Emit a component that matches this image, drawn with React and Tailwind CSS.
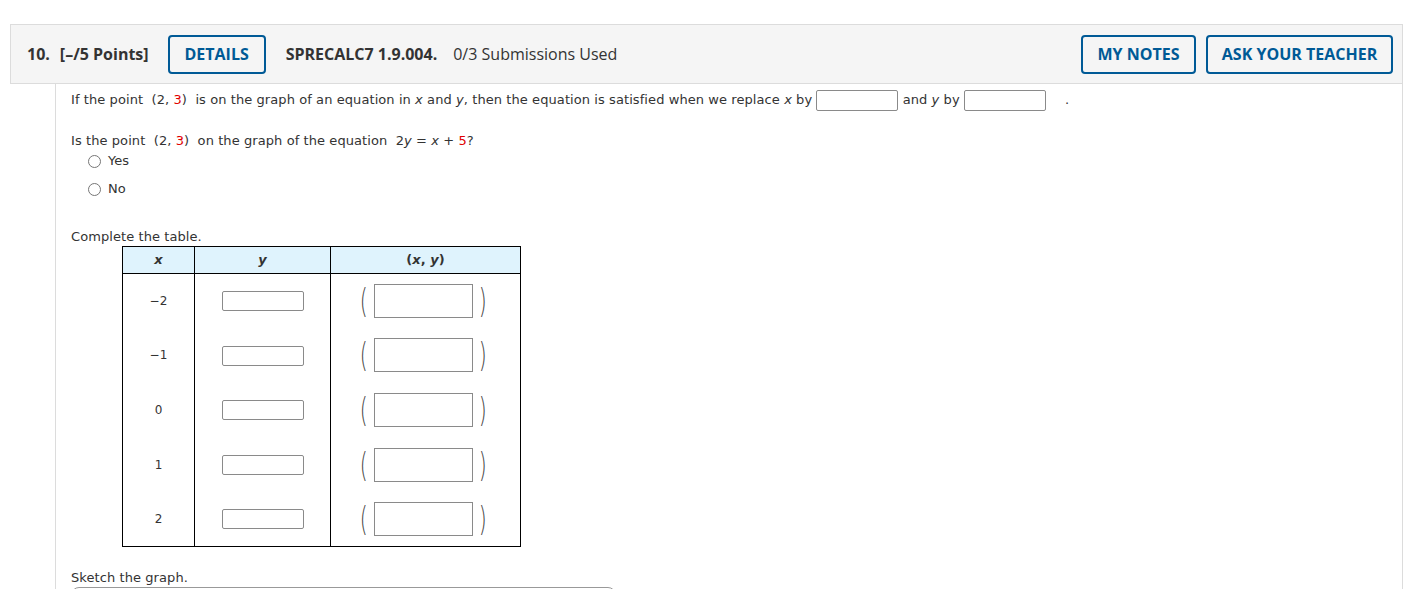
import React from "react";

const Inp = ({ w = "w-[82px]", h = "h-[21px]" }) => (
  <span className={`inline-block align-middle ${w} ${h} border border-[#8a8a8a] rounded-[2px] bg-white`} />
);

const Radio = ({ label }) => (
  <div className="flex items-center gap-[7px] pl-[17px] h-[28px]">
    <span className="inline-block w-[13px] h-[13px] rounded-full border border-[#767676] bg-white" />
    <span>{label}</span>
  </div>
);

const Red = ({ children }) => <span className="text-[#e00000]">{children}</span>;

const Paren = ({ children }) => (
  <span
    className="text-[#444] text-[34px] leading-none font-thin inline-block scale-x-[0.6]"
    style={{ fontFamily: '"DejaVu Sans", sans-serif' }}
  >
    {children}
  </span>
);

export default function App() {
  const rows = ["\u22122", "\u22121", "0", "1", "2"];
  return (
    <div className="bg-white w-[1413px] h-[589px] overflow-hidden pt-[24px] px-[10px] text-[#333]">
      <div
        className="h-[60px] border border-[#dcdcdc] bg-[#f5f5f5] flex items-center pl-[16px] pr-[9px]"
        style={{ fontFamily: '"Open Sans", sans-serif' }}
      >
        <span className="font-bold text-[16px] text-[#333]">10.</span>
        <span className="font-bold text-[16px] text-[#333] ml-[10px]">[–/5 Points]</span>
        <button className="ml-[19px] w-[98px] h-[39px] border-2 border-[#005a96] rounded-[4px] text-[#005a96] font-bold text-[16px]">
          DETAILS
        </button>
        <span className="ml-[20px] font-bold text-[16px] text-[#333]">SPRECALC7 1.9.004.</span>
        <span className="ml-[16px] text-[16px] text-[#333]">0/3 Submissions Used</span>
        <div className="ml-auto flex gap-[10px]">
          <button className="w-[115px] h-[39px] border-2 border-[#005a96] rounded-[4px] text-[#005a96] font-bold text-[16px]">
            MY NOTES
          </button>
          <button className="w-[187px] h-[39px] border-2 border-[#005a96] rounded-[4px] text-[#005a96] font-bold text-[16px]">
            ASK YOUR TEACHER
          </button>
        </div>
      </div>

      <div
        className="ml-[45px] border-l border-r border-[#dcdcdc] pl-[15px] pt-[5px] h-[600px] text-[13px] text-[#333] tracking-[0.08px]"
        style={{ fontFamily: '"DejaVu Sans", Verdana, sans-serif' }}
      >
        <div className="flex items-center h-[22px] whitespace-pre">
          <span>If the point  (2, <Red>3</Red>)  is on the graph of an equation in <i>x</i> and <i>y</i>, then the equation is satisfied when we replace <i>x</i> by </span>
          <Inp />
          <span> and <i>y</i> by </span>
          <Inp />
          <span className="ml-[19px]">.</span>
        </div>

        <div className="mt-[23px] whitespace-pre h-[14px] flex items-center">
          Is the point  (2, <Red>3</Red>)  on the graph of the equation  2<i>y</i> = <i>x</i> + <Red>5</Red>?
        </div>
        <div className="-mt-[1px]">
          <Radio label="Yes" />
          <Radio label="No" />
        </div>

        <div className="mt-[24px] h-[19px] flex items-center">Complete the table.</div>

        <table className="ml-[51px] border-collapse border border-black">
          <thead>
            <tr className="bg-[#dff3fd] h-[27px]">
              <th className="w-[72px] border border-black font-bold italic text-[13px]">x</th>
              <th className="w-[136px] border border-black font-bold italic text-[13px]">y</th>
              <th className="w-[190px] border border-black font-bold text-[13px]">
                (<i>x</i>, <i>y</i>)
              </th>
            </tr>
          </thead>
          <tbody>
            {rows.map((r, i) => (
              <tr key={i} className="h-[54.6px]">
                <td className="border-l border-r border-black text-center text-[12px]">{r}</td>
                <td className="border-l border-r border-black text-center">
                  <Inp h="h-[20px]" />
                </td>
                <td className="border-l border-r border-black">
                  <div className="flex items-center justify-center gap-[3px] pr-[5px]">
                    <Paren>(</Paren>
                    <span className="inline-block w-[99px] h-[34px] border border-[#8a8a8a] bg-white" />
                    <Paren>)</Paren>
                  </div>
                </td>
              </tr>
            ))}
          </tbody>
        </table>

        <div className="mt-[21px] h-[20px] flex items-center">Sketch the graph.</div>
        <div className="-mt-[1px] w-[545px] h-[20px] border border-[#999] rounded-t-[8px]" />
      </div>
    </div>
  );
}
